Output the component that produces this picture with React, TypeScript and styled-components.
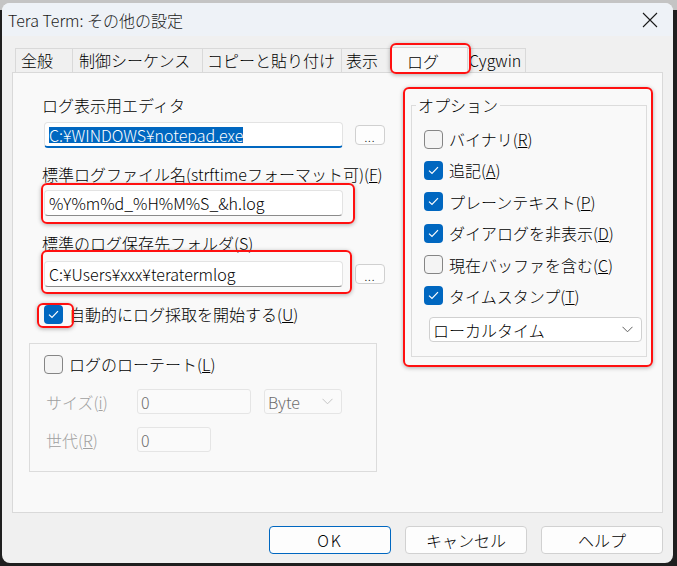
import React from "react";
import styled, { createGlobalStyle } from "styled-components";

const GlobalStyle = createGlobalStyle`
  html, body { margin: 0; padding: 0; }
  body {
    width: 677px;
    height: 566px;
    overflow: hidden;
    background: linear-gradient(#c4c4c4 0px, #c4c4c4 10px, #1f1f1f 10px);
    font-family: "Noto Sans CJK JP", "Noto Sans", sans-serif;
    font-weight: 300;
    font-size: 16px;
    color: #000;
  }
`;

const Page = styled.div`
  padding: 3px 4px 3px 2px;
`;

const Window = styled.div`
  position: relative;
  width: 671px;
  height: 560px;
  background: #f0f0f0;
  border-radius: 8px;
  overflow: hidden;
  display: flex;
  flex-direction: column;
`;

const TitleBar = styled.div`
  height: 33px;
  flex: none;
  display: flex;
  align-items: center;
  justify-content: space-between;
  background: #eef2f7;
  padding-left: 6px;
`;

const Title = styled.span`
  font-size: 16px;
  line-height: 20px;
  color: #1b1b1b;
  white-space: nowrap;
`;

const CloseButton = styled.div`
  width: 46px;
  height: 33px;
  display: flex;
  align-items: center;
  justify-content: center;
`;

const TabStrip = styled.div`
  display: flex;
  align-items: flex-end;
  height: 24px;
  margin: 12px 0 0 13px;
  position: relative;
  z-index: 1;
`;

const Tab = styled.div<{ $w: number; $pl: number; $active?: boolean }>`
  box-sizing: border-box;
  width: ${(p) => p.$w}px;
  height: ${(p) => (p.$active ? 26 : 24)}px;
  margin-bottom: ${(p) => (p.$active ? -1 : 0)}px;
  border: 1px solid #d9d9d9;
  border-bottom: none;
  border-left: none;
  &:first-child {
    border-left: 1px solid #d9d9d9;
  }
  background: ${(p) => (p.$active ? "#f9f9f9" : "#f0f0f0")};
  padding-left: ${(p) => p.$pl}px;
  padding-top: ${(p) => (p.$active ? 2 : 0)}px;
  font-size: 16px;
  line-height: 22px;
  white-space: nowrap;
  overflow: hidden;
`;

const Panel = styled.div`
  box-sizing: border-box;
  margin: 0 10px;
  height: 441px;
  flex: none;
  border: 1px solid #d9d9d9;
  background: #f9f9f9;
  display: grid;
  grid-template-columns: 348px 236px;
  column-gap: 34px;
  align-items: start;
  padding: 22px 0 0 16px;
`;

const LeftColumn = styled.div`
  display: flex;
  flex-direction: column;
`;

const FieldLabel = styled.div<{ $mt: number }>`
  margin: ${(p) => p.$mt}px 0 0 13px;
  line-height: 20px;
  height: 20px;
  white-space: nowrap;
`;

const FieldRow = styled.div<{ $mt: number }>`
  display: flex;
  align-items: center;
  gap: 12px;
  margin: ${(p) => p.$mt}px 0 0 15px;
  width: 360px;
`;

const TextBox = styled.div<{ $focused?: boolean }>`
  box-sizing: border-box;
  flex: none;
  width: 299px;
  height: 26px;
  background: #fff;
  border: 1px solid #e3e3e3;
  border-bottom: ${(p) => (p.$focused ? "2px solid #0067c0" : "1px solid #8b8b8b")};
  border-radius: 4px;
  padding-left: 4px;
  display: flex;
  align-items: center;
  white-space: nowrap;
  overflow: hidden;
  font-size: 16px;
`;

const Selection = styled.span`
  background: #0067c0;
  color: #fff;
  line-height: 16px;
  height: 16px;
  display: inline-block;
`;

const BrowseButton = styled.div`
  box-sizing: border-box;
  flex: none;
  width: 30px;
  height: 20px;
  border: 1px solid #d0d0d0;
  border-radius: 4px;
  background: #fdfdfd;
  display: flex;
  align-items: flex-end;
  justify-content: center;
  font-size: 11px;
  line-height: 14px;
  letter-spacing: 1px;
  color: #222;
`;

const CheckRow = styled.label<{ $mt?: number; $ml?: number; $disabled?: boolean }>`
  display: flex;
  align-items: center;
  gap: 6px;
  height: 20px;
  line-height: 20px;
  margin: ${(p) => p.$mt ?? 0}px 0 0 ${(p) => p.$ml ?? 0}px;
  white-space: nowrap;
  color: ${(p) => (p.$disabled ? "#a0a0a0" : "#000")};
`;

const CheckSquare = styled.span<{ $checked: boolean }>`
  box-sizing: border-box;
  width: 19px;
  height: 19px;
  flex: none;
  border-radius: 4px;
  background: ${(p) => (p.$checked ? "#0067c0" : "#f4f4f4")};
  border: ${(p) => (p.$checked ? "none" : "1px solid #858585")};
  display: flex;
  align-items: center;
  justify-content: center;
`;

const RotateGroup = styled.div`
  box-sizing: border-box;
  width: 348px;
  height: 129px;
  margin-top: 19px;
  border: 1px solid #dcdcdc;
  padding: 10px 0 0 14px;
  display: flex;
  flex-direction: column;
`;

const ParamRow = styled.div<{ $mt: number }>`
  display: flex;
  align-items: center;
  margin-top: ${(p) => p.$mt}px;
`;

const ParamLabel = styled.span`
  width: 93px;
  box-sizing: border-box;
  padding-left: 2px;
  color: #a0a0a0;
  white-space: nowrap;
  line-height: 20px;
`;

const DisabledBox = styled.div<{ $w: number; $ml?: number }>`
  box-sizing: border-box;
  width: ${(p) => p.$w}px;
  height: 25px;
  margin-left: ${(p) => p.$ml ?? 0}px;
  border: 1px solid #e5e5e5;
  border-radius: 3px;
  background: #fafafa;
  color: #6d6d6d;
  padding: 0 8px 0 3px;
  display: flex;
  align-items: center;
  justify-content: space-between;
  line-height: 20px;
`;

const OptionsGroup = styled.fieldset`
  box-sizing: border-box;
  width: 236px;
  min-width: 0;
  margin: 0;
  border: 1px solid #dcdcdc;
  padding: 14px 4px 14px 12px;
  display: flex;
  flex-direction: column;
  gap: 11.4px;
`;

const Legend = styled.legend`
  margin-left: -8px;
  padding: 0 2px;
  line-height: 20px;
  font-size: 16px;
`;

const SelectBox = styled.div`
  box-sizing: border-box;
  width: 213px;
  height: 25px;
  margin-left: 5px;
  border: 1px solid #d0d0d0;
  border-radius: 4px;
  background: #fff;
  display: flex;
  align-items: center;
  justify-content: space-between;
  padding: 0 8px 0 3px;
  line-height: 20px;
  white-space: nowrap;
`;

const ButtonRow = styled.div`
  display: flex;
  justify-content: flex-end;
  gap: 14px;
  padding: 13px 10px 0 0;
`;

const DialogButton = styled.div<{ $primary?: boolean }>`
  box-sizing: border-box;
  width: 122px;
  height: 28px;
  border: 1px solid ${(p) => (p.$primary ? "#0067c0" : "#d1d1d1")};
  border-radius: 4px;
  background: #fdfdfd;
  display: flex;
  align-items: center;
  justify-content: center;
  font-size: 16px;
  letter-spacing: ${(p) => (p.$primary ? "2px" : "0")};
`;

const Annotation = styled.div<{ $x: number; $y: number; $w: number; $h: number }>`
  position: absolute;
  left: ${(p) => p.$x}px;
  top: ${(p) => p.$y}px;
  width: ${(p) => p.$w}px;
  height: ${(p) => p.$h}px;
  box-sizing: border-box;
  border: 2px solid #ff1010;
  border-radius: 6px;
  box-shadow: 0 1px 4px rgba(0, 0, 0, 0.3);
  pointer-events: none;
  z-index: 5;
`;

const Check = () => (
  <svg width="11" height="9" viewBox="0 0 11 9">
    <polyline points="1,4.6 4,7.4 10,1.2" fill="none" stroke="#fff" strokeWidth="1.2" />
  </svg>
);

const Chevron = ({ color }: { color: string }) => (
  <svg width="11" height="7" viewBox="0 0 11 7">
    <polyline points="0.5,0.8 5.5,5.8 10.5,0.8" fill="none" stroke={color} strokeWidth="1" />
  </svg>
);

const Checkbox = ({ checked }: { checked: boolean }) => (
  <CheckSquare $checked={checked}>{checked && <Check />}</CheckSquare>
);

const Acc = ({ label, key_ }: { label: string; key_: string }) => (
  <span>
    {label}(<u>{key_}</u>)
  </span>
);

const tabs = [
  { label: "全般", w: 58, pl: 5 },
  { label: "制御シーケンス", w: 130, pl: 6 },
  { label: "コピーと貼り付け", w: 139, pl: 4 },
  { label: "表示", w: 50, pl: 4 },
  { label: "ログ", w: 76, pl: 15, active: true },
  { label: "Cygwin", w: 58, pl: 1 },
];

const options = [
  { label: "バイナリ", k: "R", checked: false },
  { label: "追記", k: "A", checked: true },
  { label: "プレーンテキスト", k: "P", checked: true },
  { label: "ダイアログを非表示", k: "D", checked: true },
  { label: "現在バッファを含む", k: "C", checked: false },
  { label: "タイムスタンプ", k: "T", checked: true },
];

export default function App() {
  return (
    <Page>
      <GlobalStyle />
      <Window>
        <TitleBar>
          <Title>Tera Term: その他の設定</Title>
          <CloseButton>
            <svg width="16" height="16" viewBox="0 0 16 16">
              <path d="M1 1 L15 15 M15 1 L1 15" stroke="#1a1a1a" strokeWidth="1.1" />
            </svg>
          </CloseButton>
        </TitleBar>

        <TabStrip>
          {tabs.map((t) => (
            <Tab key={t.label} $w={t.w} $pl={t.pl} $active={t.active}>
              {t.label}
            </Tab>
          ))}
        </TabStrip>

        <Panel>
          <LeftColumn>
            <FieldLabel $mt={0}>ログ表示用エディタ</FieldLabel>
            <FieldRow $mt={7}>
              <TextBox $focused>
                <Selection>C:¥WINDOWS¥notepad.exe</Selection>
              </TextBox>
              <BrowseButton>...</BrowseButton>
            </FieldRow>

            <FieldLabel $mt={16}>
              標準ログファイル名(strftimeフォーマット可)(<u>F</u>)
            </FieldLabel>
            <FieldRow $mt={6}>
              <TextBox>%Y%m%d_%H%M%S_&amp;h.log</TextBox>
            </FieldRow>

            <FieldLabel $mt={17}>
              <Acc label="標準のログ保存先フォルダ" key_="S" />
            </FieldLabel>
            <FieldRow $mt={8}>
              <TextBox>C:¥Users¥xxx¥teratermlog</TextBox>
              <BrowseButton>...</BrowseButton>
            </FieldRow>

            <CheckRow $mt={17} $ml={15}>
              <Checkbox checked />
              <Acc label="自動的にログ採取を開始する" key_="U" />
            </CheckRow>

            <RotateGroup>
              <CheckRow>
                <Checkbox checked={false} />
                <Acc label="ログのローテート" key_="L" />
              </CheckRow>
              <ParamRow $mt={15}>
                <ParamLabel>
                  サイズ(<u>i</u>)
                </ParamLabel>
                <DisabledBox $w={114}>0</DisabledBox>
                <DisabledBox $w={78} $ml={13}>
                  Byte
                  <Chevron color="#c4c4c4" />
                </DisabledBox>
              </ParamRow>
              <ParamRow $mt={13}>
                <ParamLabel>
                  世代(<u>R</u>)
                </ParamLabel>
                <DisabledBox $w={74}>0</DisabledBox>
              </ParamRow>
            </RotateGroup>
          </LeftColumn>

          <OptionsGroup>
            <Legend>オプション</Legend>
            {options.map((o) => (
              <CheckRow key={o.k}>
                <Checkbox checked={o.checked} />
                <Acc label={o.label} key_={o.k} />
              </CheckRow>
            ))}
            <SelectBox>
              ローカルタイム
              <Chevron color="#606060" />
            </SelectBox>
          </OptionsGroup>
        </Panel>

        <ButtonRow>
          <DialogButton $primary>OK</DialogButton>
          <DialogButton>キャンセル</DialogButton>
          <DialogButton>ヘルプ</DialogButton>
        </ButtonRow>

        <Annotation $x={388} $y={40} $w={81} $h={31} />
        <Annotation $x={39} $y={180} $w={314} $h={41} />
        <Annotation $x={39} $y={247} $w={311} $h={44} />
        <Annotation $x={35} $y={300} $w={37} $h={25} />
        <Annotation $x={401} $y={84} $w={250} $h={280} />
      </Window>
    </Page>
  );
}
